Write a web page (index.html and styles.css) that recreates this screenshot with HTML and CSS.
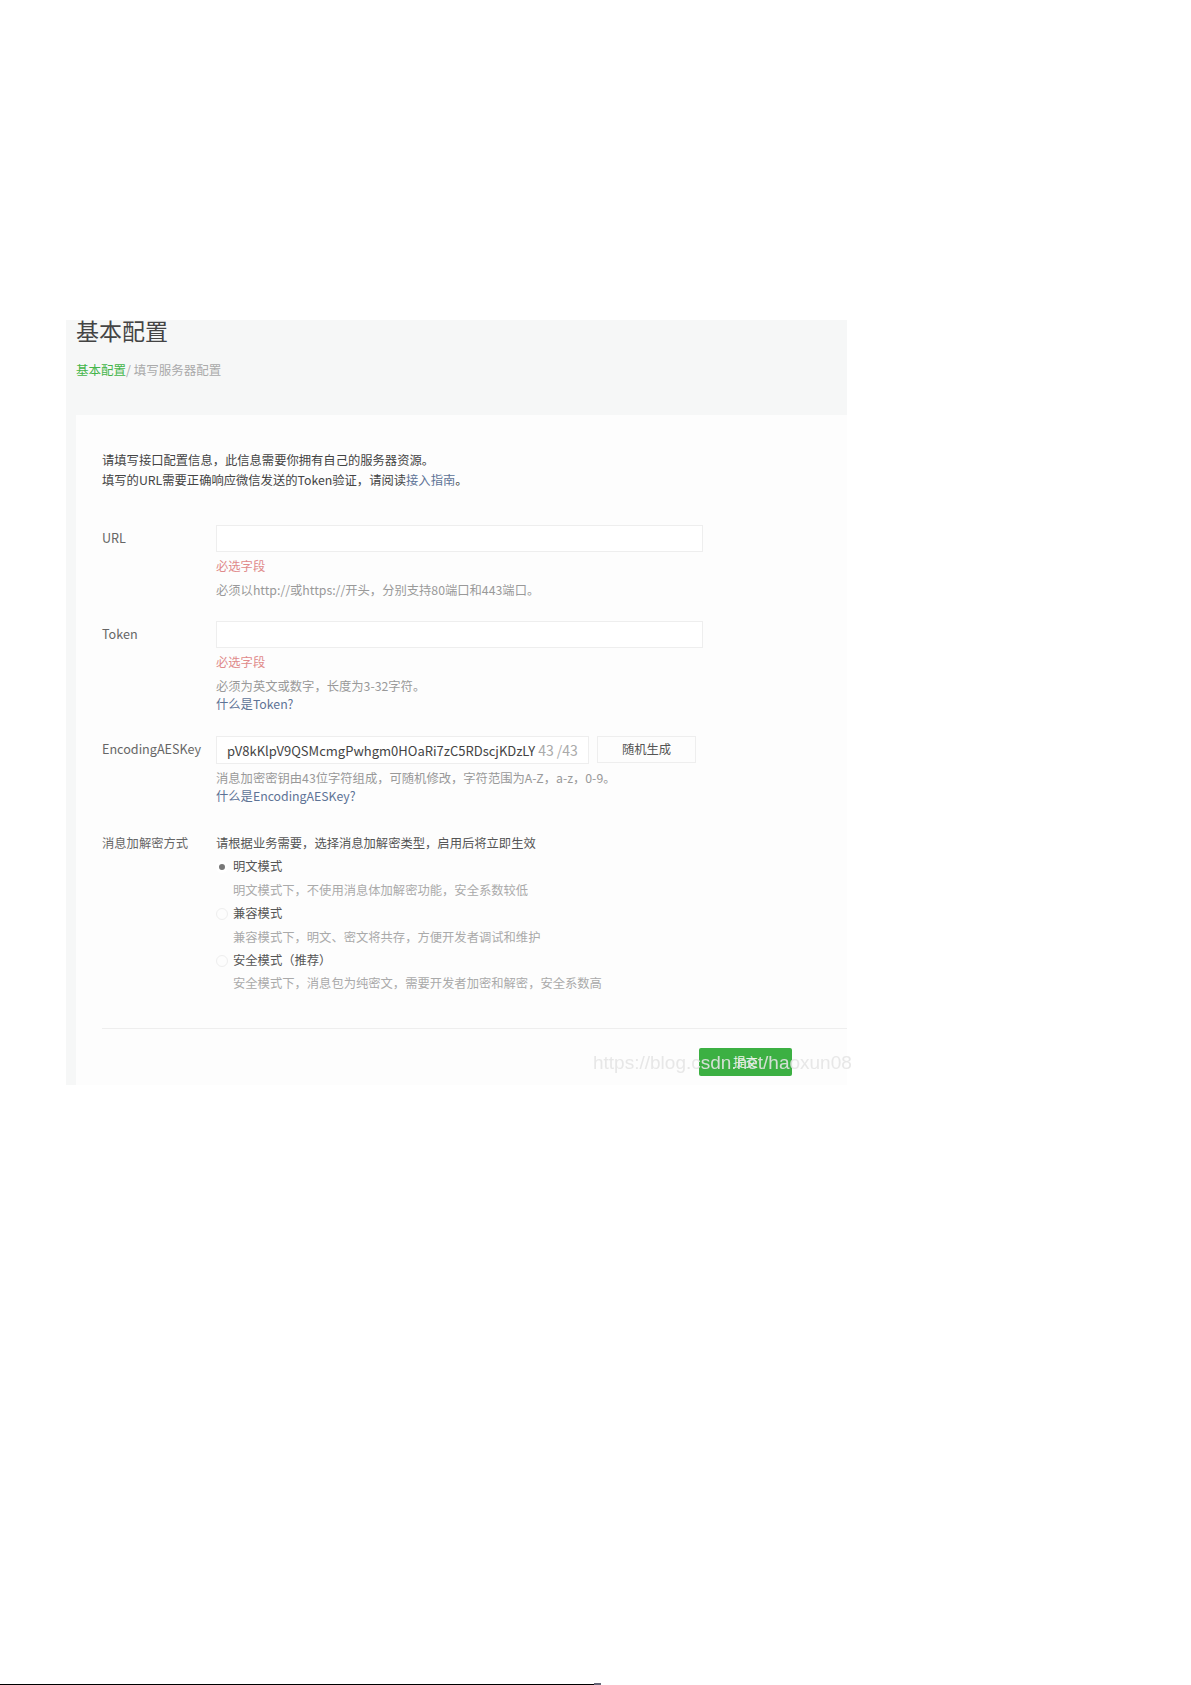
FILE: index.html
```html
<!DOCTYPE html>
<html lang="zh-CN">

<head>
    <meta charset="UTF-8">
    <title>基本配置</title>
    <link rel="stylesheet" href="styles.css">
</head>

<body>

    <div class="shot">
        <div class="panel">
            <div class="page-head">
                <h1 class="page-title">基本配置</h1>
                <div class="crumbs"><span class="crumb-on">基本配置</span>/ 填写服务器配置</div>
            </div>

            <div class="card">
                <div class="notice">
                    <p>请填写接口配置信息&#65292;此信息需要你拥有自己的服务器资源。</p>
                    <p>填写的URL需要正确响应微信发送的Token验证&#65292;请阅读<span class="link">接入指南</span>。</p>
                </div>

                <div class="row row-url">
                    <div class="label">URL</div>
                    <div class="field">
                        <div class="input"></div>
                        <div class="error">必选字段</div>
                        <div class="hint">必须以http://或https://开头&#65292;分别支持80端口和443端口。</div>
                    </div>
                </div>

                <div class="row row-token">
                    <div class="label">Token</div>
                    <div class="field">
                        <div class="input"></div>
                        <div class="error">必选字段</div>
                        <div class="hint">必须为英文或数字&#65292;长度为3-32字符。</div>
                        <div class="link more">什么是Token?</div>
                    </div>
                </div>

                <div class="row row-aes">
                    <div class="label">EncodingAESKey</div>
                    <div class="field">
                        <div class="key-line">
                            <div class="input key-input">
                                <span>pV8kKlpV9QSMcmgPwhgm0HOaRi7zC5RDscjKDzLY</span>
                                <span class="count">43 /43</span>
                            </div>
                            <div class="btn-random">随机生成</div>
                        </div>
                        <div class="hint hint-key">消息加密密钥由43位字符组成&#65292;可随机修改&#65292;字符范围为A-Z&#65292;a-z&#65292;0-9。</div>
                        <div class="link more">什么是EncodingAESKey?</div>
                    </div>
                </div>

                <div class="row row-mode">
                    <div class="label">消息加解密方式</div>
                    <div class="field modes">
                        <div class="mode-intro">请根据业务需要&#65292;选择消息加解密类型&#65292;启用后将立即生效</div>
                        <div class="mode"><span class="radio radio-on"></span>明文模式</div>
                        <div class="mode-hint">明文模式下&#65292;不使用消息体加解密功能&#65292;安全系数较低</div>
                        <div class="mode"><span class="radio"></span>兼容模式</div>
                        <div class="mode-hint">兼容模式下&#65292;明文、密文将共存&#65292;方便开发者调试和维护</div>
                        <div class="mode"><span class="radio"></span>安全模式&#65288;推荐&#65289;</div>
                        <div class="mode-hint">安全模式下&#65292;消息包为纯密文&#65292;需要开发者加密和解密&#65292;安全系数高</div>
                    </div>
                </div>

                <div class="actions">
                    <div class="btn-submit">提交</div>
                </div>
            </div>
        </div>
        <div class="watermark">https://blog.csdn.net/haoxun08</div>
    </div>

    <div class="page-end"></div>

</body>

</html>
```

FILE: styles.css
```css
html,
body {
    margin: 0;
    padding: 0;
    background-color: #fff;
}

body {
    font-family: "Noto Sans CJK SC", sans-serif;
    font-size: 12.3px;
    color: #555;
    height: 1685px;
    overflow: hidden;
    position: relative;
}

p {
    margin: 0;
}

.shot {
    position: relative;
    width: 847px;
    margin: 320px 0 0 66px;
    filter: blur(0.7px);
}

.panel {
    width: 781px;
    height: 765px;
    overflow: hidden;
    background-color: #f6f7f7;
}

.page-head {
    height: 95px;
    padding-left: 10px;
}

.page-title {
    margin: 0;
    font-size: 23px;
    font-weight: 400;
    line-height: 20px;
    color: #444;
}

.crumbs {
    margin-top: 20px;
    line-height: 20px;
    font-size: 12.5px;
    color: #aaa;
}

.crumb-on {
    color: #44b549;
}

.card {
    margin-left: 10px;
    height: 670px;
    padding: 35px 0 0 26px;
    background-color: #fdfdfd;
}

.notice {
    line-height: 20px;
    color: #444;
}

.link {
    color: #5d7396;
}

.row {
    display: flex;
}

.row-url {
    margin-top: 35px;
}

.row-token {
    margin-top: 21px;
}

.row-aes {
    margin-top: 22px;
}

.row-mode {
    margin-top: 26px;
}

.label {
    width: 114px;
    flex-shrink: 0;
    font-size: 12.6px;
    line-height: 25px;
    color: #666;
}

.row-mode .label {
    font-size: 12.3px;
    line-height: 23.4px;
}

.field {
    width: 487px;
}

.input {
    height: 27px;
    box-sizing: border-box;
    border: 1px solid #eee;
    background-color: #fff;
}

.error {
    margin-top: 4px;
    line-height: 20px;
    color: #e08a8a;
}

.hint {
    margin-top: 4px;
    line-height: 20px;
    color: #999;
}

.more {
    margin-top: -1px;
    line-height: 19px;
}

.key-line {
    display: flex;
    gap: 8px;
}

.key-input {
    width: 373px;
    height: 28px;
    padding-left: 10px;
    font-size: 13px;
    line-height: 26px;
    color: #444;
    white-space: nowrap;
}

.count {
    font-size: 14px;
    color: #aaa;
}

.btn-random {
    width: 99px;
    height: 27px;
    box-sizing: border-box;
    border: 1px solid #eee;
    text-align: center;
    line-height: 25px;
    color: #555;
}

.hint-key {
    margin-top: 5px;
    line-height: 19px;
}

.modes {
    line-height: 23.4px;
    white-space: nowrap;
}

.mode-intro {
    color: #555;
}

.mode {
    display: flex;
    align-items: center;
    color: #555;
}

.mode-hint {
    padding-left: 17px;
    color: #aaa;
}

.radio {
    width: 12px;
    height: 12px;
    margin-right: 5px;
    box-sizing: border-box;
    border: 1px solid #eee;
    border-radius: 50%;
}

.radio-on {
    border: 3px solid #fff;
    background-color: #777;
}

.actions {
    display: flex;
    justify-content: flex-end;
    margin-top: 32px;
    padding: 19px 55px 0 0;
    border-top: 1px solid #eee;
}

.btn-submit {
    width: 93px;
    height: 28px;
    border-radius: 2px;
    background-color: #3cb043;
    text-align: center;
    line-height: 28px;
    color: #e9f6e9;
}

/* sits over the submit button, like the blog stamp in the picture */
.watermark {
    position: absolute;
    left: 527px;
    top: 730px;
    font-family: "Liberation Sans", sans-serif;
    font-size: 19px;
    line-height: 26px;
    white-space: nowrap;
    color: rgba(228, 228, 228, 0.9);
}

.page-end {
    position: absolute;
    left: 0;
    bottom: 0;
    width: 594px;
    height: 1px;
    background-color: #000;
}

.page-end::after {
    content: "";
    position: absolute;
    left: 594px;
    bottom: 0;
    width: 7px;
    height: 2px;
    background-color: #667;
}
```
